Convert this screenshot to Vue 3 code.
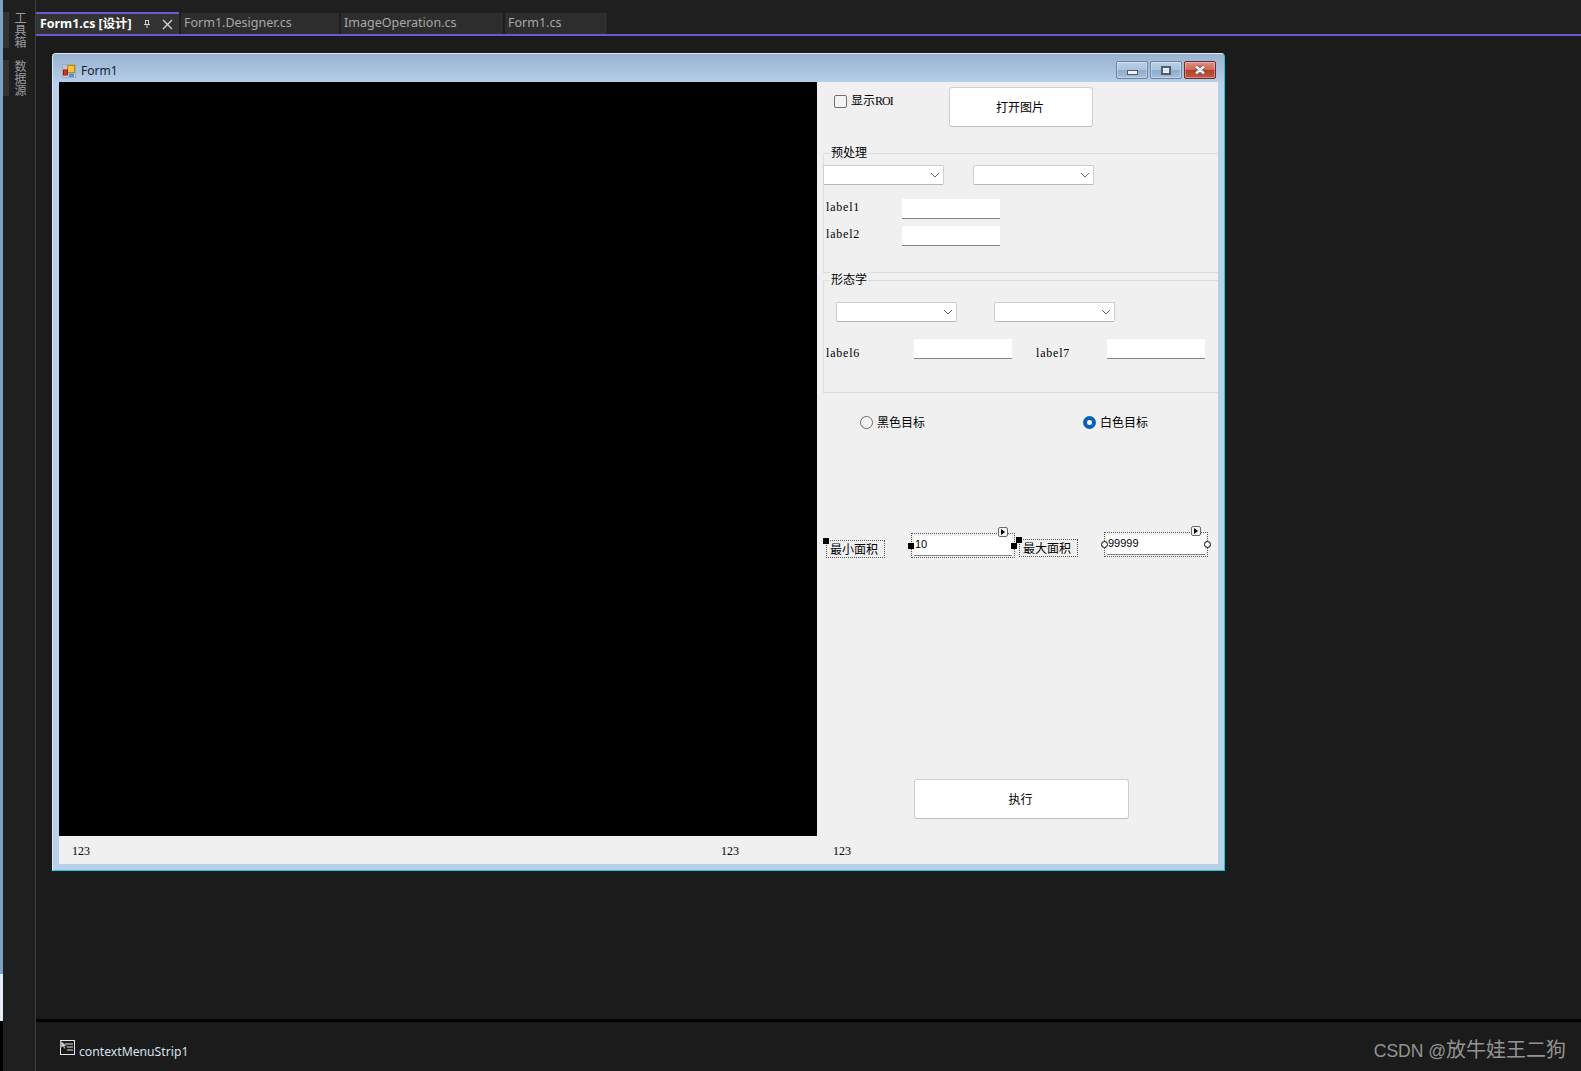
<template>
  <div class="ide">
    <aside class="rail">
      <div class="rail-tab"><span class="rail-text">工具箱</span></div>
      <div class="rail-tab"><span class="rail-text">数据源</span></div>
    </aside>

    <main class="main">
      <div class="tabs">
        <div class="tab active">
          <span>Form1.cs [设计]</span>
          <svg class="pin" width="10" height="10" viewBox="0 0 10 10">
            <path d="M3 1.5h4M3.5 1.5v4M6.5 1.5v4M2 5.5h6M5 5.5v3.5" fill="none" stroke="#d0d0d0" stroke-width="1" />
          </svg>
          <svg class="close" width="11" height="11" viewBox="0 0 11 11">
            <path d="M1 1l9 9M10 1l-9 9" fill="none" stroke="#d8d8d8" stroke-width="1.3" />
          </svg>
        </div>
        <div v-for="t in otherTabs" :key="t.name" class="tab" :style="{ width: t.width + 'px' }">{{ t.name }}</div>
      </div>

      <div class="designer">
        <div class="form">
          <div class="titlebar">
            <svg class="form-icon" width="14" height="14" viewBox="0 0 14 14">
              <rect x="0.5" y="0.5" width="13" height="13" fill="#c9d3dc" fill-opacity="0.5" stroke="#9eaab5" />
              <rect x="5.5" y="1.5" width="7" height="7" fill="#f7c52c" stroke="#b98a14" />
              <rect x="1.5" y="6" width="4" height="5" fill="#d8352a" stroke="#8e1d16" />
              <rect x="7" y="9.5" width="5" height="3.5" fill="#4d8fe0" />
            </svg>
            <span class="form-title">Form1</span>
            <div class="winbtns">
              <div class="winbtn">
                <span class="glyph-min"></span>
              </div>
              <div class="winbtn">
                <span class="glyph-max"></span>
              </div>
              <div class="winbtn red">
                <svg width="14" height="10" viewBox="0 0 14 10">
                  <path d="M3 1.5l8 7M11 1.5l-8 7" fill="none" stroke="#5a4a4a" stroke-width="4.2" />
                  <path d="M3 1.5l8 7M11 1.5l-8 7" fill="none" stroke="#f1f1f1" stroke-width="2.8" />
                </svg>
              </div>
            </div>
          </div>

          <div class="client">
            <div class="top">
              <div class="picture"></div>

              <div class="panel">
                <div class="open-row">
                  <label class="check"><span class="checkbox"></span><span class="cjk">显示<span class="mono roi">ROI</span></span></label>
                  <div class="btn open">打开图片</div>
                </div>

                <div class="group g1">
                  <span class="legend">预处理</span>
                  <div class="combos c1">
                    <div v-for="i in 2" :key="i" class="combo">
                      <svg width="10" height="6" viewBox="0 0 10 6"><path d="M1 1l4 4 4-4" fill="none" stroke="#666" /></svg>
                    </div>
                  </div>
                  <div class="field-row first">
                    <span class="mono lbl">label1</span>
                    <div class="input"></div>
                  </div>
                  <div class="field-row">
                    <span class="mono lbl">label2</span>
                    <div class="input"></div>
                  </div>
                </div>

                <div class="group g2">
                  <span class="legend">形态学</span>
                  <div class="combos c2">
                    <div v-for="i in 2" :key="i" class="combo">
                      <svg width="10" height="6" viewBox="0 0 10 6"><path d="M1 1l4 4 4-4" fill="none" stroke="#666" /></svg>
                    </div>
                  </div>
                  <div class="field-row two">
                    <span class="mono lbl l6">label6</span>
                    <div class="input"></div>
                    <span class="mono lbl l7">label7</span>
                    <div class="input"></div>
                  </div>
                </div>

                <div class="radios">
                  <label class="radio first"><span class="dot"></span>黑色目标</label>
                  <label class="radio"><span class="dot on"></span>白色目标</label>
                </div>

                <div class="selected-row">
                  <div class="sel-label s1">
                    <i class="handle tl"></i>
                    最小面积
                  </div>
                  <div class="sel-input s2">
                    <div class="sel-box">10</div>
                    <i class="handle ml"></i>
                    <i class="handle mr"></i>
                    <span class="smart"><b></b></span>
                  </div>
                  <div class="sel-label s3">
                    <i class="handle tl"></i>
                    最大面积
                  </div>
                  <div class="sel-input s4">
                    <div class="sel-box">99999</div>
                    <i class="handle ml hollow"></i>
                    <i class="handle mr hollow"></i>
                    <span class="smart"><b></b></span>
                  </div>
                </div>

                <div class="btn run">执行</div>
              </div>
            </div>

            <div class="status">
              <span class="mono n1">123</span>
              <span class="mono n2">123</span>
              <span class="mono">123</span>
            </div>
          </div>
        </div>
      </div>

      <div class="tray">
        <svg width="15" height="15" viewBox="0 0 15 15">
          <rect x="0.5" y="0.5" width="14" height="14" fill="#1a1a1a" stroke="#e6e6e6" />
          <path d="M5 4h8M7 7h6M7 10h6" stroke="#e6e6e6" />
          <path d="M1 1v7l2-1.6 1.4 2.4 1.2-.7L4.4 6H7z" fill="#cfcfcf" stroke="#333" stroke-width="0.5" />
        </svg>
        <span class="tray-text">contextMenuStrip1</span>
        <span class="watermark"><span class="wm-latin">CSDN @</span>放牛娃王二狗</span>
      </div>
    </main>
  </div>
</template>

<script setup>
const otherTabs = [
  { name: 'Form1.Designer.cs', width: 158 },
  { name: 'ImageOperation.cs', width: 162 },
  { name: 'Form1.cs', width: 102 },
];
</script>

<style>
html, body {
  margin: 0;
  background: #1b1b1b;
  overflow: hidden;
}
</style>

<style scoped>
* {
  box-sizing: border-box;
}
.ide {
  width: 1581px;
  height: 1071px;
  display: flex;
  background: #1b1b1b;
  font-family: "Noto Sans", "Noto Sans CJK SC", sans-serif;
  overflow: hidden;
}
.rail {
  width: 35px;
  flex: none;
  padding-top: 12px;
  background: #1f1f1f;
  border-left: 3px solid;
  border-image: linear-gradient(#7ba3c4 0, #7ba3c4 973px, #e4edf6 973px, #e4edf6 1020px, #000 1020px) 1;
}
.rail-tab {
  height: 36px;
  margin-bottom: 12px;
  border-left: 6px solid #333;
  padding-left: 4px;
}
.rail-text {
  writing-mode: vertical-rl;
  font-size: 12px;
  line-height: 13px;
  color: #9a9aa0;
}
.main {
  flex: 1;
  min-width: 0;
  display: flex;
  flex-direction: column;
  border-left: 1px solid #3e3e3e;
}
.tabs {
  display: flex;
  align-items: flex-end;
  gap: 2px;
  height: 36px;
  padding-top: 12px;
  background: #1f1f1f;
  border-bottom: 2px solid #6b58d3;
  font-size: 12.5px;
  color: #a8a8a8;
}
.tab {
  height: 21px;
  padding-left: 3px;
  line-height: 19px;
  background: #2d2d2d;
  white-space: nowrap;
}
.tab.active {
  width: 143px;
  height: 22px;
  padding-left: 4px;
  border-top: 2px solid #6b58d3;
  background: #333;
  color: #fff;
  font-size: 12.4px;
  font-weight: 700;
  line-height: 20px;
  display: flex;
  align-items: center;
}
.pin {
  margin-left: 10px;
}
.close {
  margin-left: 10px;
}
.designer {
  flex: 1;
  padding: 17px 0 0 16px;
}
.form {
  width: 1173px;
  height: 818px;
  padding: 0 6px 6px 6px;
  border-radius: 4px 4px 0 0;
  border: 1px solid #dfe9f3;
  border-right-color: #19c6dc;
  border-bottom-color: #19c6dc;
  background: linear-gradient(#98b3d0 0, #b5cde8 28px, #b8d0ea 28px);
}
.titlebar {
  height: 28px;
  display: flex;
  align-items: center;
  margin-left: 3px;
  padding-top: 5px;
}
.form-title {
  margin-left: 5px;
  font-size: 12px;
  color: #14202e;
}
.winbtns {
  margin-left: auto;
  margin-right: 2px;
  margin-top: -1px;
  display: flex;
  gap: 2px;
}
.winbtn {
  width: 32px;
  height: 18px;
  display: flex;
  align-items: center;
  justify-content: center;
  border: 1px solid #6f83a0;
  border-radius: 2px;
  background: linear-gradient(#bcd0e6 0, #a9c2dc 48%, #8facca 52%, #a5bfda 100%);
  box-shadow: inset 0 0 0 1px rgba(255, 255, 255, 0.35);
}
.winbtn.red {
  border-color: #6e2a33;
  background: linear-gradient(#dc8f80 0, #cf6a58 48%, #b83c28 52%, #c45a42 100%);
}
.glyph-min {
  width: 11px;
  height: 5px;
  margin-top: 4px;
  background: #eef1f4;
  border: 1px solid #4f5b6b;
}
.glyph-max {
  width: 10px;
  height: 9px;
  background: #dfe6ee;
  border: 2px solid #4f5b6b;
  box-shadow: inset 0 0 0 1px #eef2f6;
}
.client {
  height: 782px;
  display: flex;
  flex-direction: column;
  background: #f0f0f0;
}
.top {
  height: 754px;
  display: flex;
}
.picture {
  width: 758px;
  background: #000;
}
.panel {
  flex: 1;
  min-width: 0;
  font-size: 12px;
  color: #000;
}
.mono {
  font-family: "Liberation Serif", serif;
  font-size: 12px;
  line-height: 12px;
  color: #000;
}
.roi {
  letter-spacing: -1px;
}
.open-row {
  display: flex;
  padding: 5px 0 0 17px;
}
.check {
  width: 115px;
  height: 14px;
  margin-top: 7px;
  display: flex;
  align-items: center;
  gap: 4px;
}
.checkbox {
  width: 13px;
  height: 13px;
  border: 1px solid #6f6f6f;
  border-radius: 2px;
  background: #f4f4f4;
}
.cjk {
  line-height: 14px;
}
.btn {
  display: flex;
  align-items: center;
  justify-content: center;
  padding-right: 2px;
  background: #fff;
  border: 1px solid #cfcfcf;
  border-bottom-color: #bdbdbd;
  border-radius: 3px;
}
.open {
  width: 144px;
  height: 40px;
}
.group {
  position: relative;
  margin-left: 6px;
  border: 1px solid #dcdcdc;
  border-right: 0;
}
.g1 {
  height: 120px;
  margin-top: 26px;
  padding-top: 11px;
}
.g2 {
  height: 113px;
  margin-top: 7px;
  padding-top: 21px;
}
.legend {
  position: absolute;
  top: -10px;
  left: 6px;
  padding: 0 1px;
  line-height: 17px;
  background: #f0f0f0;
}
.combos {
  display: flex;
}
.c1 {
  gap: 29px;
  margin-left: -1px;
}
.c2 {
  gap: 37px;
  margin-left: 12px;
}
.combo {
  width: 121px;
  height: 20px;
  display: flex;
  align-items: center;
  justify-content: flex-end;
  padding-right: 3px;
  background: #fff;
  border: 1px solid #cfcfcf;
  border-bottom-color: #b8b8b8;
  border-radius: 2px;
}
.field-row {
  display: flex;
  align-items: center;
  margin-top: 7px;
  padding-left: 2px;
}
.field-row.first {
  margin-top: 14px;
}
.field-row.two {
  margin-top: 17px;
}
.lbl {
  width: 76px;
  flex: none;
  letter-spacing: 0.8px;
  position: relative;
  top: -2px;
}
.two .lbl {
  top: 4px;
}
.l6 {
  width: 88px;
}
.l7 {
  width: 71px;
  margin-left: 24px;
}
.input {
  width: 98px;
  height: 20px;
  background: #fff;
  border-bottom: 1px solid #848484;
}
.radios {
  display: flex;
  margin-top: 22px;
  padding-left: 43px;
}
.radio {
  display: flex;
  align-items: center;
  gap: 4px;
  height: 16px;
  line-height: 16px;
}
.radio.first {
  width: 223px;
}
.dot {
  width: 13px;
  height: 13px;
  margin-top: -1px;
  border: 1px solid #6a6a6a;
  border-radius: 50%;
  background: #f4f4f4;
}
.dot.on {
  border: 4px solid #0a62b8;
  background: #fff;
}
.selected-row {
  display: flex;
  align-items: flex-start;
  height: 26px;
  margin-top: 101px;
  padding-left: 9px;
}
.sel-label {
  position: relative;
  width: 59px;
  height: 18px;
  padding-left: 3px;
  border: 1px dotted #555;
  line-height: 17px;
  white-space: nowrap;
}
.s1 {
  margin-top: 8px;
}
.s3 {
  margin-top: 7px;
  margin-left: 4px;
}
.sel-input {
  position: relative;
  width: 104px;
  height: 25px;
  padding: 2px 2px 0;
  border: 1px dotted #555;
}
.s2 {
  margin-top: 1px;
  margin-left: 26px;
}
.s4 {
  margin-left: 26px;
}
.sel-box {
  height: 20px;
  padding-left: 1px;
  background: #fff;
  border-bottom: 1px solid #848484;
  font-family: "Liberation Sans", sans-serif;
  font-size: 11px;
  line-height: 17px;
}
.handle {
  position: absolute;
  width: 6px;
  height: 6px;
  background: #000;
  border: 1px solid #000;
}
.handle.tl {
  top: -3px;
  left: -4px;
}
.handle.ml {
  top: 9px;
  left: -4px;
}
.handle.mr {
  top: 9px;
  right: -3px;
}
.handle.hollow {
  top: 8px;
  width: 7px;
  height: 7px;
  background: #fff;
  border-width: 1.5px;
  border-radius: 50%;
}
.handle.mr.hollow {
  right: -4px;
}
.smart {
  position: absolute;
  top: -7px;
  right: 6px;
  width: 10px;
  height: 10px;
  display: flex;
  align-items: center;
  justify-content: center;
  background: #f2f2f2;
  border: 1px solid #6a6a5e;
  border-radius: 2px;
}
.smart b {
  width: 0;
  height: 0;
  border-left: 4px solid #000;
  border-top: 3px solid transparent;
  border-bottom: 3px solid transparent;
}
.run {
  width: 215px;
  height: 40px;
  margin: 221px 0 0 97px;
}
.status {
  flex: 1;
  display: flex;
  align-items: center;
  padding-left: 13px;
  padding-top: 2px;
}
.n1 {
  width: 649px;
}
.n2 {
  width: 112px;
}
.tray {
  position: relative;
  height: 52px;
  display: flex;
  align-items: center;
  padding: 0 0 0 24px;
  border-top: 3px solid #000;
  gap: 4px;
}
.tray svg {
  margin-top: 2px;
}
.tray-text {
  font-size: 12.2px;
  color: #d6e2ee;
  margin-top: 10px;
}
.watermark {
  margin-left: auto;
  margin-right: 15px;
  margin-top: 3px;
  font-family: "Liberation Sans", "Noto Sans CJK SC", sans-serif;
  font-size: 20px;
  color: #949494;
}
.wm-latin {
  font-size: 17.5px;
}
</style>
